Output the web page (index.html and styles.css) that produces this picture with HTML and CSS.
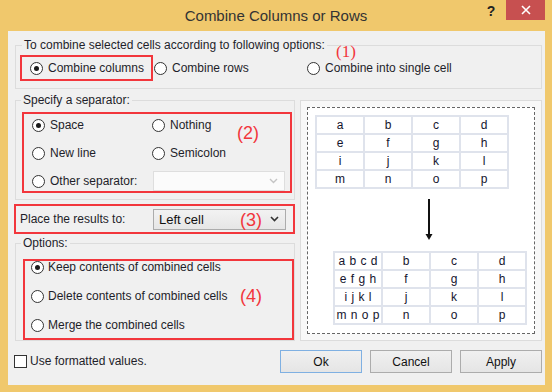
FILE: index.html
```html
<!DOCTYPE html>
<html lang="en">
<head>
  <meta charset="UTF-8">
  <title>Combine Columns or Rows</title>
  <link rel="stylesheet" href="styles.css">
</head>
<body>

<div class="window">
  <!-- title bar -->
  <div class="titlebar">
    <span class="spacer"></span>
    <span class="title">Combine Columns or Rows</span>
    <span class="help">?</span>
    <span class="close">
      <svg width="10" height="10" viewBox="0 0 10 10"><path d="M1 1 L9 9 M9 1 L1 9" stroke="#fff" stroke-width="1.6"/></svg>
    </span>
  </div>

  <div class="dialog">

    <div class="group g1">
      <div class="group-title">To combine selected cells according to following options:</div>
      <div class="mode-row">
        <label class="opt mark mark1"><input type="radio" name="mode" checked> Combine columns</label>
        <label class="opt mode2"><input type="radio" name="mode"> Combine rows</label>
        <label class="opt"><input type="radio" name="mode"> Combine into single cell</label>
      </div>
      <span class="note serif n1">(1)</span>
    </div>

    <div class="main">
      <div class="left">

        <div class="group g2">
          <div class="group-title">Specify a separator:</div>
          <div class="mark sep-grid">
            <label class="opt"><input type="radio" name="sep" checked> Space</label>
            <label class="opt"><input type="radio" name="sep"> Nothing</label>
            <label class="opt"><input type="radio" name="sep"> New line</label>
            <label class="opt"><input type="radio" name="sep"> Semicolon</label>
            <label class="opt"><input type="radio" name="sep"> Other separator:</label>
            <div class="combo disabled">
              <span></span>
              <svg width="9" height="6" viewBox="0 0 9 6"><path d="M1 1 L4.5 4.5 L8 1" fill="none" stroke="#c4c4c4" stroke-width="1.4"/></svg>
            </div>
            <span class="note n2">(2)</span>
          </div>
        </div>

        <div class="mark place-row">
          <span>Place the results to:</span>
          <div class="combo">
            <span>Left cell</span>
            <svg width="9" height="6" viewBox="0 0 9 6"><path d="M1 1 L4.5 4.5 L8 1" fill="none" stroke="#333" stroke-width="1.6"/></svg>
          </div>
          <span class="note n3">(3)</span>
        </div>

        <div class="group g3">
          <div class="group-title">Options:</div>
          <div class="mark opt-list">
            <label class="opt"><input type="radio" name="keep" checked> Keep contents of combined cells</label>
            <label class="opt"><input type="radio" name="keep"> Delete contents of combined cells</label>
            <label class="opt"><input type="radio" name="keep"> Merge the combined cells</label>
            <span class="note n4">(4)</span>
          </div>
        </div>

      </div>

      <div class="preview">
        <div class="preview-inner">
          <table class="cells before">
            <tr><td>a</td><td>b</td><td>c</td><td>d</td></tr>
            <tr><td>e</td><td>f</td><td>g</td><td>h</td></tr>
            <tr><td>i</td><td>j</td><td>k</td><td>l</td></tr>
            <tr><td>m</td><td>n</td><td>o</td><td>p</td></tr>
          </table>
          <svg class="arrow" width="10" height="41" viewBox="0 0 10 41">
            <line x1="5" y1="0" x2="5" y2="36" stroke="#111" stroke-width="2"/>
            <polygon points="1.5,35 8.5,35 5,41" fill="#111"/>
          </svg>
          <table class="cells after">
            <tr><td>a b c d</td><td>b</td><td>c</td><td>d</td></tr>
            <tr><td>e f g h</td><td>f</td><td>g</td><td>h</td></tr>
            <tr><td>i j k l</td><td>j</td><td>k</td><td>l</td></tr>
            <tr><td>m n o p</td><td>n</td><td>o</td><td>p</td></tr>
          </table>
        </div>
      </div>
    </div>

    <div class="footer">
      <label class="check"><input type="checkbox"> Use formatted values.</label>
      <div class="buttons">
        <button class="default">Ok</button>
        <button>Cancel</button>
        <button>Apply</button>
      </div>
    </div>

  </div>
</div>

</body>
</html>
```

FILE: styles.css
```css
body {
  margin: 0;
  font-family: "Liberation Sans", Arial, sans-serif;
  font-size: 12px;
  line-height: 15px;
  color: #1e1e2a;
}
.window {
  width: 552px;
  height: 392px;
  box-sizing: border-box;
  background: #f0c86c;
  padding: 0 7px 7px 8px;
}

/* title bar */
.titlebar {
  height: 31px;
  display: flex;
  align-items: flex-start;
  margin: 0 -7px 0 -8px;
}
.titlebar .spacer {
  width: 70px;
}
.titlebar .title {
  flex: 1;
  text-align: center;
  font-size: 15px;
  line-height: 32px;
  color: #333;
}
.titlebar .help {
  width: 18px;
  text-align: center;
  font-weight: bold;
  font-size: 14px;
  line-height: 22px;
  color: #222;
  margin-right: 6px;
}
.titlebar .close {
  width: 39px;
  height: 20px;
  background: #c75050;
  margin-right: 7px;
  display: flex;
  align-items: center;
  justify-content: center;
}

.dialog {
  height: 354px;
  background: #f0f0f0;
  padding: 0 3px 0 7px;
  box-sizing: border-box;
  display: flex;
  flex-direction: column;
}

/* group boxes */
.group {
  border: 1px solid #dcdcdc;
  position: relative;
}
.group-title {
  width: fit-content;
  margin: -8px 0 0 5px;
  padding: 0 2px;
  background: #f0f0f0;
}

/* red annotation boxes */
.mark {
  border: 2px solid #f2363c;
  position: relative;
}
.note {
  position: absolute;
  color: #f2363c;
  font-size: 18px;
  line-height: 20px;
}
.note.serif {
  font-family: "Liberation Serif", "Times New Roman", serif;
  font-size: 17px;
  line-height: 14px;
}

/* radios */
.opt {
  display: flex;
  align-items: center;
  gap: 5px;
  white-space: nowrap;
}
input[type=radio] {
  appearance: none;
  margin: 0;
  width: 13px;
  height: 13px;
  border: 1px solid #333;
  border-radius: 50%;
  background: #fff;
  box-sizing: border-box;
  display: grid;
  place-items: center;
  flex: none;
}
input[type=radio]:checked::after {
  content: "";
  width: 5px;
  height: 5px;
  border-radius: 50%;
  background: #1a1a1a;
}
input[type=checkbox] {
  appearance: none;
  margin: 0;
  width: 13px;
  height: 13px;
  border: 1px solid #333;
  background: #fff;
  flex: none;
}

/* group 1 */
.g1 {
  margin-top: 14px;
  padding-bottom: 7px;
}
.g1 .group-title {
  margin-left: 6px;
}
.mode-row {
  display: flex;
  align-items: center;
  margin-top: 2px;
  padding-left: 4px;
}
.mark1 {
  width: 133px;
  height: 26px;
  box-sizing: border-box;
  padding-left: 8px;
}
.mode2 {
  width: 153px;
  margin-left: 1px;
}
.n1 {
  left: 320px;
  top: -1px;
}

.main {
  display: grid;
  grid-template-columns: 280px 242px;
  gap: 5px;
  margin-top: 11px;
}

/* separator */
.g2 {
  padding-bottom: 6px;
}
.sep-grid {
  margin: 4px 2px 0 6px;
  padding: 1px 0 0 8px;
  display: grid;
  grid-template-columns: 120px 1fr;
  grid-template-rows: 20px 20px 20px;
  row-gap: 8px;
}
.n2 {
  left: 213px;
  top: 9px;
}

.combo {
  height: 21px;
  width: 133px;
  box-sizing: border-box;
  border: 1px solid #acacac;
  background: linear-gradient(#f2f2f2, #e6e6e6);
  display: flex;
  align-items: center;
  justify-content: space-between;
  padding: 0 6px 0 5px;
  color: #111;
  font-size: 13px;
}
.combo.disabled {
  width: 132px;
  height: 20px;
  margin-left: 1px;
  border-color: #dedede;
  background: #fbfbfb;
}

/* place results row */
.place-row {
  width: 281px;
  height: 30px;
  box-sizing: border-box;
  margin: 4px 0 0 -1px;
  padding: 0 7px 0 4px;
  display: flex;
  align-items: center;
  justify-content: space-between;
}
.n3 {
  left: 224px;
  top: 4px;
}

/* options */
.g3 {
  margin-top: 9px;
}
.opt-list {
  margin: 8px 0 0 7px;
  padding: 0 0 6px 6px;
  display: grid;
  grid-template-rows: 13px 13px 13px;
  row-gap: 16px;
}
.opt-list .opt {
  gap: 4px;
}
.n4 {
  left: 215px;
  top: 25px;
}

/* preview */
.preview {
  border: 1px solid #dcdcdc;
  background: #f8f8f8;
  padding: 6px;
  display: flex;
}
.preview-inner {
  flex: 1;
  border: 1px dashed #666;
  background: #fff;
  padding: 7px 0 0 7px;
  display: flex;
  flex-direction: column;
  align-items: flex-start;
}
.cells {
  border-collapse: collapse;
  table-layout: fixed;
  width: 194px;
}
.cells td {
  border: 2px solid #dfe3ec;
  height: 16px;
  padding: 0;
  text-align: center;
  font-size: 12px;
  line-height: 16px;
  color: #14142e;
}
.cells.after {
  margin: 11px 0 0 18px;
}
.cells.after td {
  word-spacing: 1px;
}
.arrow {
  margin: 10px 0 0 109px;
}

/* footer */
.footer {
  display: flex;
  align-items: center;
  margin-top: 9px;
  height: 23px;
}
.check {
  display: flex;
  align-items: center;
  gap: 3px;
  margin-left: -1px;
}
.buttons {
  margin-left: auto;
  display: flex;
  gap: 8px;
}
.buttons button {
  width: 82px;
  height: 23px;
  font-family: inherit;
  font-size: 12px;
  color: #111;
  border: 1px solid #acacac;
  background: linear-gradient(#f0f0f0, #e5e5e5);
  padding: 0;
}
.buttons button.default {
  border-color: #7fb0e2;
}
```
